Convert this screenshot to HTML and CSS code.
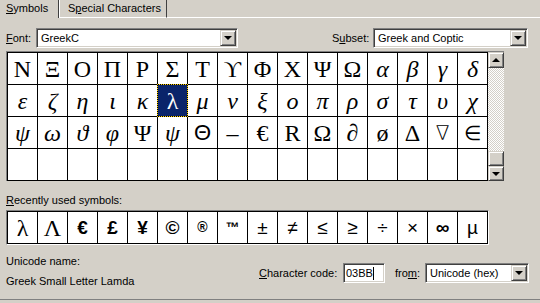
FILE: index.html
```html
<!DOCTYPE html>
<html lang="en">
<head>
    <meta charset="UTF-8">
    <title>Symbol</title>
    <link rel="stylesheet" href="styles.css">
</head>
<body>
    <div class="tabs">
        <div class="tab tab-active"><u>S</u>ymbols</div>
        <div class="tab">S<u>p</u>ecial Characters</div>
        <div class="tab-fill"></div>
    </div>

    <div class="panel">
        <!-- font / subset pickers -->
        <div class="font-row">
            <label class="lbl font-lbl"><u>F</u>ont:</label>
            <div class="combo font-combo"><span class="combo-text">GreekC</span><span class="drop"><i class="arrow-down"></i></span></div>
            <label class="lbl subset-lbl">S<u>u</u>bset:</label>
            <div class="combo subset-combo"><span class="combo-text">Greek and Coptic</span><span class="drop"><i class="arrow-down"></i></span></div>
        </div>

        <!-- character map -->
        <div class="chart">
            <div class="grid">
                <div class="cell">Ν</div><div class="cell">Ξ</div><div class="cell">Ο</div><div class="cell">Π</div>
                <div class="cell">Ρ</div><div class="cell">Σ</div><div class="cell">Τ</div><div class="cell">ϒ</div>
                <div class="cell">Φ</div><div class="cell">Χ</div><div class="cell">Ψ</div><div class="cell">Ω</div>
                <div class="cell it">α</div><div class="cell it">β</div><div class="cell it">γ</div><div class="cell it">δ</div>

                <div class="cell it">ε</div><div class="cell it">ζ</div><div class="cell it">η</div><div class="cell it">ι</div>
                <div class="cell it">κ</div><div class="cell selected">λ</div><div class="cell it">μ</div><div class="cell it">ν</div>
                <div class="cell it">ξ</div><div class="cell it">ο</div><div class="cell it">π</div><div class="cell it">ρ</div>
                <div class="cell it">σ</div><div class="cell it">τ</div><div class="cell it">υ</div><div class="cell it">χ</div>

                <div class="cell it">ψ</div><div class="cell it">ω</div><div class="cell it">ϑ</div><div class="cell it">φ</div>
                <div class="cell">Ψ</div><div class="cell it">ψ</div><div class="cell theta">Θ</div><div class="cell">–</div>
                <div class="cell">€</div><div class="cell">R</div><div class="cell">Ω</div><div class="cell it">∂</div>
                <div class="cell">ø</div><div class="cell">Δ</div><div class="cell thin">∇</div><div class="cell thin">∈</div>

                <div class="cell"></div><div class="cell"></div><div class="cell"></div><div class="cell"></div>
                <div class="cell"></div><div class="cell"></div><div class="cell"></div><div class="cell"></div>
                <div class="cell"></div><div class="cell"></div><div class="cell"></div><div class="cell"></div>
                <div class="cell"></div><div class="cell"></div><div class="cell"></div><div class="cell"></div>
            </div>
            <div class="vscroll">
                <div class="sb-btn"><i class="arrow-up"></i></div>
                <div class="sb-track"></div>
                <div class="sb-thumb"></div>
                <div class="sb-btn sb-down"><i class="arrow-down"></i></div>
            </div>
        </div>

        <div class="recent-lbl"><u>R</u>ecently used symbols:</div>
        <div class="recent-box">
            <div class="grid recent">
                <div class="cell">λ</div><div class="cell">Λ</div>
                <div class="cell sym bold">€</div><div class="cell sym bold">£</div>
                <div class="cell sym bold">¥</div><div class="cell sym bold">©</div>
                <div class="cell sym bold small">®</div><div class="cell sym bold small">™</div>
                <div class="cell sym">±</div><div class="cell sym">≠</div>
                <div class="cell sym">≤</div><div class="cell sym">≥</div>
                <div class="cell sym">÷</div><div class="cell sym">×</div>
                <div class="cell sym bold">∞</div><div class="cell sym">µ</div>
            </div>
        </div>

        <!-- details -->
        <div class="bottom-row">
            <div class="uname">
                <div>Unicode name:</div>
                <div>Greek Small Letter Lamda</div>
            </div>
            <div class="code-group">
                <label class="lbl code-lbl"><u>C</u>haracter code:</label>
                <div class="code-input">03BB<span class="caret"></span></div>
                <label class="lbl from-lbl">fro<u>m</u>:</label>
                <div class="combo from-combo"><span class="combo-text">Unicode (hex)</span><span class="drop"><i class="arrow-down"></i></span></div>
            </div>
        </div>
    </div>
</body>
</html>
```

FILE: styles.css
```css
body {
    margin: 0;
    background: #d4d0c8;
    font-family: "Liberation Sans", Arial, sans-serif;
    font-size: 11px;
    line-height: 13px;
    color: #000;
}

/* tab strip */
.tabs {
    display: flex;
    height: 18px;
}
.tab {
    box-sizing: border-box;
    padding: 2px 0 0 8px;
    width: 108px;
    border-left: 1px solid #fff;
    border-right: 1px solid #404040;
    border-bottom: 1px solid #fff;
}
.tab-active {
    width: 59px;
    padding-left: 6px;
    border-left: none;
    border-bottom: none;
}
.tab-fill {
    flex: 1;
    border-bottom: 1px solid #fff;
}

.panel {
    box-sizing: border-box;
    height: 282px;
    padding: 10px 0 0 6px;
    border-bottom: 1px solid #808080;
}

.font-row {
    display: flex;
    align-items: center;
    height: 20px;
}
.font-lbl {
    width: 30px;
}
.subset-lbl {
    width: 41px;
    margin-left: 94px;
}

/* sunken combo boxes */
.combo {
    box-sizing: border-box;
    display: flex;
    align-items: center;
    height: 20px;
    padding: 1px;
    background: #fff;
    border: 1px solid;
    border-color: #808080 #fff #fff #808080;
    box-shadow: inset 1px 1px #404040, inset -1px -1px #d4d0c8;
}
.combo-text {
    flex: 1;
    padding-left: 3px;
}
.font-combo {
    width: 202px;
}
.subset-combo {
    width: 155px;
}
.drop,
.sb-btn {
    box-sizing: border-box;
    display: flex;
    align-items: center;
    justify-content: center;
    width: 16px;
    height: 16px;
    background: #d4d0c8;
    border: 1px solid;
    border-color: #d4d0c8 #404040 #404040 #d4d0c8;
    box-shadow: inset 1px 1px #fff, inset -1px -1px #808080;
}
.arrow-down {
    border-left: 4px solid transparent;
    border-right: 4px solid transparent;
    border-top: 4px solid #000;
}
.arrow-up {
    border-left: 4px solid transparent;
    border-right: 4px solid transparent;
    border-bottom: 4px solid #000;
}

/* character grid */
.chart {
    display: flex;
    width: max-content;
    margin-top: 3px;
    border-top: 1px solid #808080;
    border-left: 1px solid #808080;
}
.grid {
    display: grid;
    grid-template-columns: repeat(16, 30px);
    border-top: 1px solid #000;
    border-left: 1px solid #000;
    background: #fff;
}
.cell {
    box-sizing: border-box;
    height: 32px;
    display: flex;
    align-items: center;
    justify-content: center;
    border-right: 1px solid #000;
    border-bottom: 1px solid #000;
    font-family: "Liberation Serif", "DejaVu Serif", serif;
    font-size: 24px;
    line-height: 30px;
}
.it {
    font-style: italic;
}
.thin {
    font-family: "DejaVu Sans", sans-serif;
    font-weight: 200;
    font-size: 20px;
}
.theta {
    font-family: "Liberation Sans", Arial, sans-serif;
    font-size: 22px;
}
.selected {
    position: relative;
    background: #0a246a;
    color: #fff;
}
.selected::after {
    content: "";
    position: absolute;
    top: -1px;
    left: -1px;
    right: -1px;
    bottom: -1px;
    border: 1px dotted #ffd000;
}

.vscroll {
    display: flex;
    flex-direction: column;
    width: 16px;
    height: 129px;
}
.sb-track {
    flex: 1;
    background: repeating-conic-gradient(#fff 0 25%, #d4d0c8 0 50%) 0 0 / 2px 2px;
}
.sb-thumb {
    box-sizing: border-box;
    height: 15px;
    background: #d4d0c8;
    border: 1px solid;
    border-color: #d4d0c8 #404040 #404040 #d4d0c8;
    box-shadow: inset 1px 1px #fff, inset -1px -1px #808080;
}
.sb-down {
    height: 15px;
}

/* recently used */
.recent-lbl {
    margin-top: 13px;
}
.recent-box {
    width: max-content;
    margin-top: 3px;
    border-top: 1px solid #808080;
    border-left: 1px solid #808080;
    border-right: 1px solid #fff;
    border-bottom: 1px solid #fff;
}
.sym {
    font-family: "Liberation Sans", Arial, sans-serif;
    font-size: 19px;
}
.bold {
    font-weight: bold;
}
.small {
    font-size: 14px;
    align-items: flex-start;
    padding-top: 0;
}

/* bottom details */
.bottom-row {
    display: flex;
    margin-top: 10px;
}
.uname {
    display: flex;
    flex-direction: column;
    gap: 7px;
    width: 253px;
}
.code-group {
    display: flex;
    align-items: center;
    height: 20px;
    margin-top: 8px;
}
.code-lbl {
    width: 84px;
}
.code-input {
    box-sizing: border-box;
    display: flex;
    align-items: center;
    width: 42px;
    height: 20px;
    padding-left: 2px;
    background: #fff;
    border: 1px solid;
    border-color: #808080 #fff #fff #808080;
    box-shadow: inset 1px 1px #404040, inset -1px -1px #d4d0c8;
}
.caret {
    display: inline-block;
    width: 1px;
    height: 13px;
    background: #000;
}
.from-lbl {
    width: 30px;
    margin-left: 10px;
}
.from-combo {
    width: 104px;
}
```
